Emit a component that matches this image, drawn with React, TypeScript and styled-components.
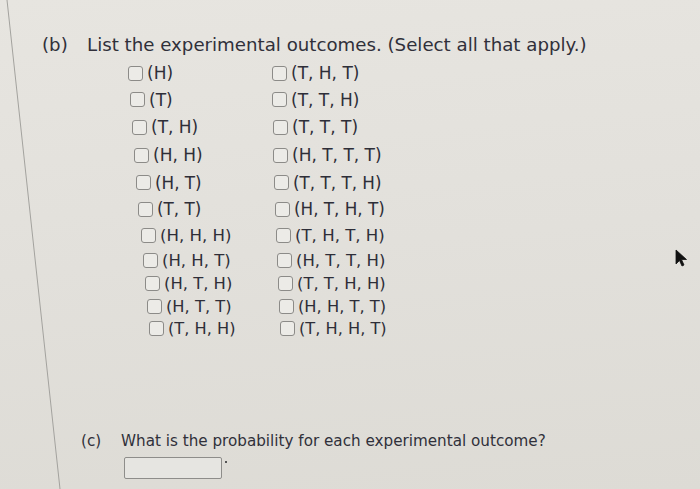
import React from "react";
import styled, { createGlobalStyle } from "styled-components";

const Global = createGlobalStyle`
  html, body { margin: 0; padding: 0; }
  body { background: #e2e0db; }
`;

const Page = styled.div`
  position: relative;
  width: 700px;
  height: 489px;
  overflow: hidden;
  background: linear-gradient(175deg, #e7e5e0 0%, #e2e0db 50%, #dddbd5 100%);
  font-family: "DejaVu Sans", Verdana, sans-serif;
  color: #30303a;
  display: flex;
  flex-direction: column;
`;

const FrameLine = styled.svg`
  position: absolute;
  left: 0;
  top: 0;
  pointer-events: none;
`;

const Cursor = styled.svg`
  position: absolute;
  left: 675px;
  top: 249px;
`;

const Heading = styled.div<{ $top: number; $size: number; $labelX: number; $textX: number }>`
  display: flex;
  align-items: center;
  margin-top: ${(p) => p.$top}px;
  padding-left: ${(p) => p.$labelX}px;
  font-size: ${(p) => p.$size}px;
  line-height: 22px;
  white-space: nowrap;
  & > span:first-child {
    width: ${(p) => p.$textX - p.$labelX}px;
  }
`;

const Options = styled.div`
  display: flex;
  flex-direction: column;
  margin-top: 4px;
`;

const Row = styled.div<{ $h: number; $lx: number }>`
  display: flex;
  align-items: center;
  height: ${(p) => p.$h}px;
  padding-left: ${(p) => p.$lx}px;
`;

const Option = styled.label<{ $w?: number; $size: number }>`
  display: flex;
  align-items: center;
  gap: 4px;
  width: ${(p) => (p.$w ? `${p.$w}px` : "auto")};
  font-size: ${(p) => p.$size}px;
  white-space: nowrap;
  color: #2e2e38;
`;

const Box = styled.span`
  display: inline-block;
  width: 13px;
  height: 13px;
  border: 1.5px solid #8c8b88;
  border-radius: 3px;
  background: #ecebe7;
  flex: none;
`;

const AnswerRow = styled.div`
  display: flex;
  align-items: center;
  margin-top: 5px;
  padding-left: 124px;
  gap: 3px;
`;

const Input = styled.div`
  width: 96px;
  height: 20px;
  border: 1px solid #8e8d8a;
  border-radius: 2px;
  background: #e6e5e1;
`;

const Dot = styled.span`
  width: 2px;
  height: 2px;
  background: #555;
  align-self: flex-start;
  margin-top: 4px;
`;

const rows = [
  { l: "(H)", r: "(T, H, T)", lx: 128, rx: 272, h: 26, fs: 17 },
  { l: "(T)", r: "(T, T, H)", lx: 130, rx: 272, h: 27, fs: 17 },
  { l: "(T, H)", r: "(T, T, T)", lx: 132, rx: 273, h: 28, fs: 17 },
  { l: "(H, H)", r: "(H, T, T, T)", lx: 134, rx: 273, h: 28, fs: 17 },
  { l: "(H, T)", r: "(T, T, T, H)", lx: 136, rx: 274, h: 27, fs: 16.8 },
  { l: "(T, T)", r: "(H, T, H, T)", lx: 138, rx: 275, h: 26, fs: 16.8 },
  { l: "(H, H, H)", r: "(T, H, T, H)", lx: 141, rx: 276, h: 26, fs: 16.6 },
  { l: "(H, H, T)", r: "(H, T, T, H)", lx: 143, rx: 277, h: 24, fs: 16.5 },
  { l: "(H, T, H)", r: "(T, T, H, H)", lx: 145, rx: 278, h: 23, fs: 16.4 },
  { l: "(H, T, T)", r: "(H, H, T, T)", lx: 147, rx: 279, h: 22, fs: 16.3 },
  { l: "(T, H, H)", r: "(T, H, H, T)", lx: 149, rx: 280, h: 22, fs: 16.2 },
];

export default function App() {
  return (
    <>
      <Global />
      <Page>
        <FrameLine width="700" height="489">
          <line x1="7" y1="0" x2="60" y2="489" stroke="#a3a29e" strokeWidth="1" />
        </FrameLine>
        <Heading $top={34} $size={18.2} $labelX={42} $textX={87}>
          <span>(b)</span>
          <span>List the experimental outcomes. (Select all that apply.)</span>
        </Heading>
        <Options>
          {rows.map((r) => (
            <Row key={r.l} $h={r.h} $lx={r.lx}>
              <Option $w={r.rx - r.lx} $size={r.fs}>
                <Box />
                {r.l}
              </Option>
              <Option $size={r.fs}>
                <Box />
                {r.r}
              </Option>
            </Row>
          ))}
        </Options>
        <Heading $top={91} $size={15.2} $labelX={81} $textX={121}>
          <span>(c)</span>
          <span>What is the probability for each experimental outcome?</span>
        </Heading>
        <AnswerRow>
          <Input />
          <Dot />
        </AnswerRow>
        <Cursor width="14" height="18" viewBox="0 0 14 18">
          <path d="M1 1 L1 15 L4.5 11.5 L7 17 L9 16 L6.5 10.5 L11.5 10.5 Z" fill="#111" stroke="#111" strokeWidth="0.8" strokeLinejoin="round" />
        </Cursor>
      </Page>
    </>
  );
}
